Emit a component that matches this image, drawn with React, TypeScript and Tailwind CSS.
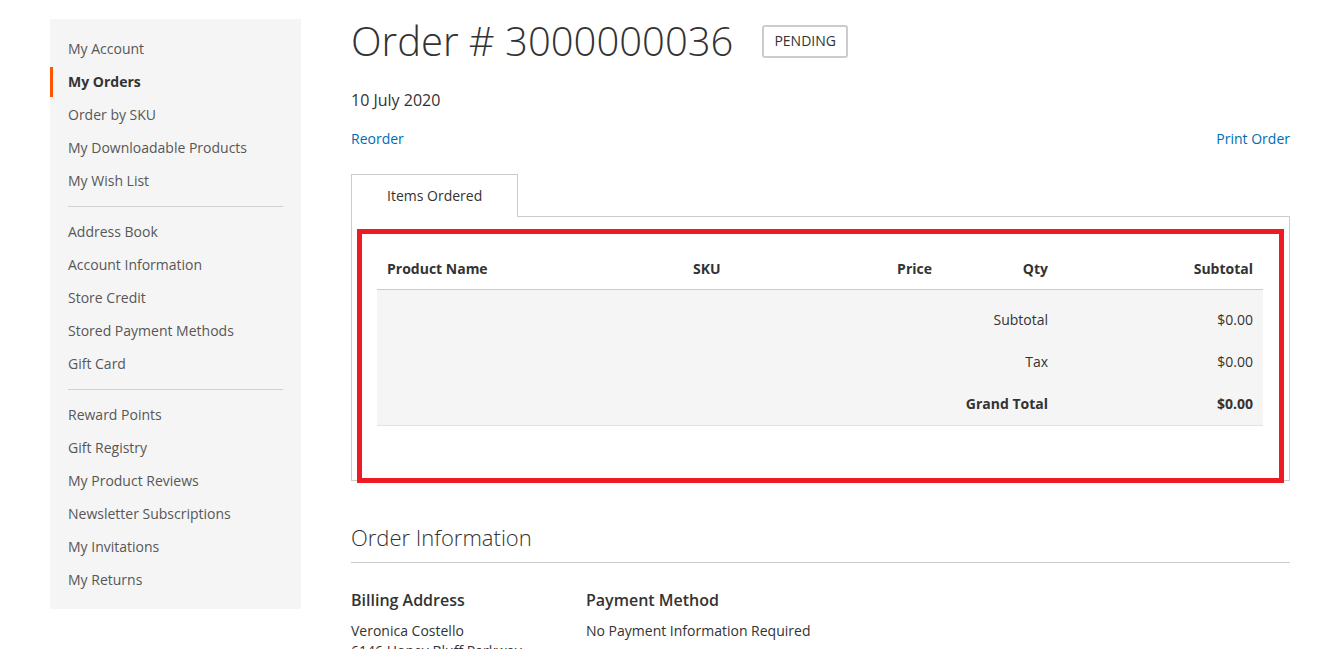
import React from "react";

const group1 = ["My Account", "My Orders", "Order by SKU", "My Downloadable Products", "My Wish List"];
const group2 = ["Address Book", "Account Information", "Store Credit", "Stored Payment Methods", "Gift Card"];
const group3 = ["Reward Points", "Gift Registry", "My Product Reviews", "Newsletter Subscriptions", "My Invitations", "My Returns"];

function NavItem({ label }: { label: string }) {
  const active = label === "My Orders";
  return (
    <li
      className={
        active
          ? "h-[30px] flex items-center border-l-[3px] border-[#ff5501] pl-[15px] text-[#333] font-bold"
          : "h-[30px] flex items-center border-l-[3px] border-transparent pl-[15px] text-[#575757]"
      }
    >
      {label}
    </li>
  );
}

function Divider() {
  return <li className="h-px bg-[#d1d1d1] mx-[18px] my-[7px]" />;
}

export default function App() {
  return (
    <div
      className="min-h-screen bg-white text-[#333] text-[14px] leading-[20px]"
      style={{ fontFamily: '"Open Sans", "Liberation Sans", sans-serif' }}
    >
      <div className="flex pl-[50px] pt-[19px]">
        {/* Sidebar */}
        <aside className="w-[251px] shrink-0 self-start bg-[#f5f5f5] pt-[15px] pb-[14px]">
          <ul className="flex flex-col gap-[3px]">
            {group1.map((l) => (
              <NavItem key={l} label={l} />
            ))}
            <Divider />
            {group2.map((l) => (
              <NavItem key={l} label={l} />
            ))}
            <Divider />
            {group3.map((l) => (
              <NavItem key={l} label={l} />
            ))}
          </ul>
        </aside>

        {/* Main */}
        <main className="ml-[50px] w-[939px] shrink-0">
          <div className="flex items-center h-[44px]">
            <h1 className="text-[40px] leading-[44px] font-light text-[#333]">Order # 3000000036</h1>
            <span className="ml-[29px] h-[33px] flex items-center border-2 border-[#ccc] rounded-[3px] px-[10px] text-[14px] uppercase text-[#333]">
              Pending
            </span>
          </div>

          <div className="mt-[25px] text-[16px] leading-[24px]">10 July 2020</div>

          <div className="mt-[17px] flex justify-between leading-[20px] text-[#006bb4]">
            <a>Reorder</a>
            <a>Print Order</a>
          </div>

          <div className="mt-[25px] flex">
            <div className="relative z-10 -mb-px h-[43px] flex items-center px-[35px] bg-white border-x border-t border-[#ccc] text-[#333]">
              Items Ordered
            </div>
          </div>

          <div className="relative border border-[#ccc] pt-[31px] pb-[54px] pl-[25px] pr-[26px]">
            <div className="text-[#333]">
              <div className="grid grid-cols-[306px_147px_112px_116px_1fr] h-[42px] items-center font-bold border-b border-[#ccc]">
                <div className="px-[10px]">Product Name</div>
                <div className="px-[10px]">SKU</div>
                <div className="px-[10px] text-right">Price</div>
                <div className="px-[10px] text-right">Qty</div>
                <div className="px-[10px] text-right">Subtotal</div>
              </div>
              <div className="bg-[#f5f5f5] pt-[9px] border-b border-[#e3e3e3]">
                {[
                  ["Subtotal", "$0.00", false],
                  ["Tax", "$0.00", false],
                  ["Grand Total", "$0.00", true],
                ].map(([label, value, bold]) => (
                  <div
                    key={label as string}
                    className={
                      bold
                        ? "grid grid-cols-[681px_1fr] h-[42px] items-center font-bold"
                        : "grid grid-cols-[681px_1fr] h-[42px] items-center"
                    }
                  >
                    <div className="px-[10px] text-right">{label}</div>
                    <div className="px-[10px] text-right">{value}</div>
                  </div>
                ))}
              </div>
            </div>
            <div className="absolute left-[5px] right-[5px] top-[12px] bottom-[-3px] border-[5px] border-[#ed1c24] pointer-events-none" />
          </div>

          <h2 className="mt-[44px] text-[22px] leading-[24px] font-light text-[#333] pb-[13px] border-b border-[#ccc]">
            Order Information
          </h2>

          <div className="mt-[26px] flex">
            <div className="w-[235px]">
              <div className="text-[16px] leading-[22px] font-semibold">Billing Address</div>
              <div className="mt-[10px] leading-[20px]">
                <div>Veronica Costello</div>
                <div>6146 Honey Bluff Parkway</div>
                <div>Calder, Michigan, 49628-7978</div>
                <div>United States</div>
                <div>T: (555) 229-3326</div>
              </div>
            </div>
            <div>
              <div className="text-[16px] leading-[22px] font-semibold">Payment Method</div>
              <div className="mt-[10px] leading-[20px]">No Payment Information Required</div>
            </div>
          </div>
        </main>
      </div>
    </div>
  );
}
